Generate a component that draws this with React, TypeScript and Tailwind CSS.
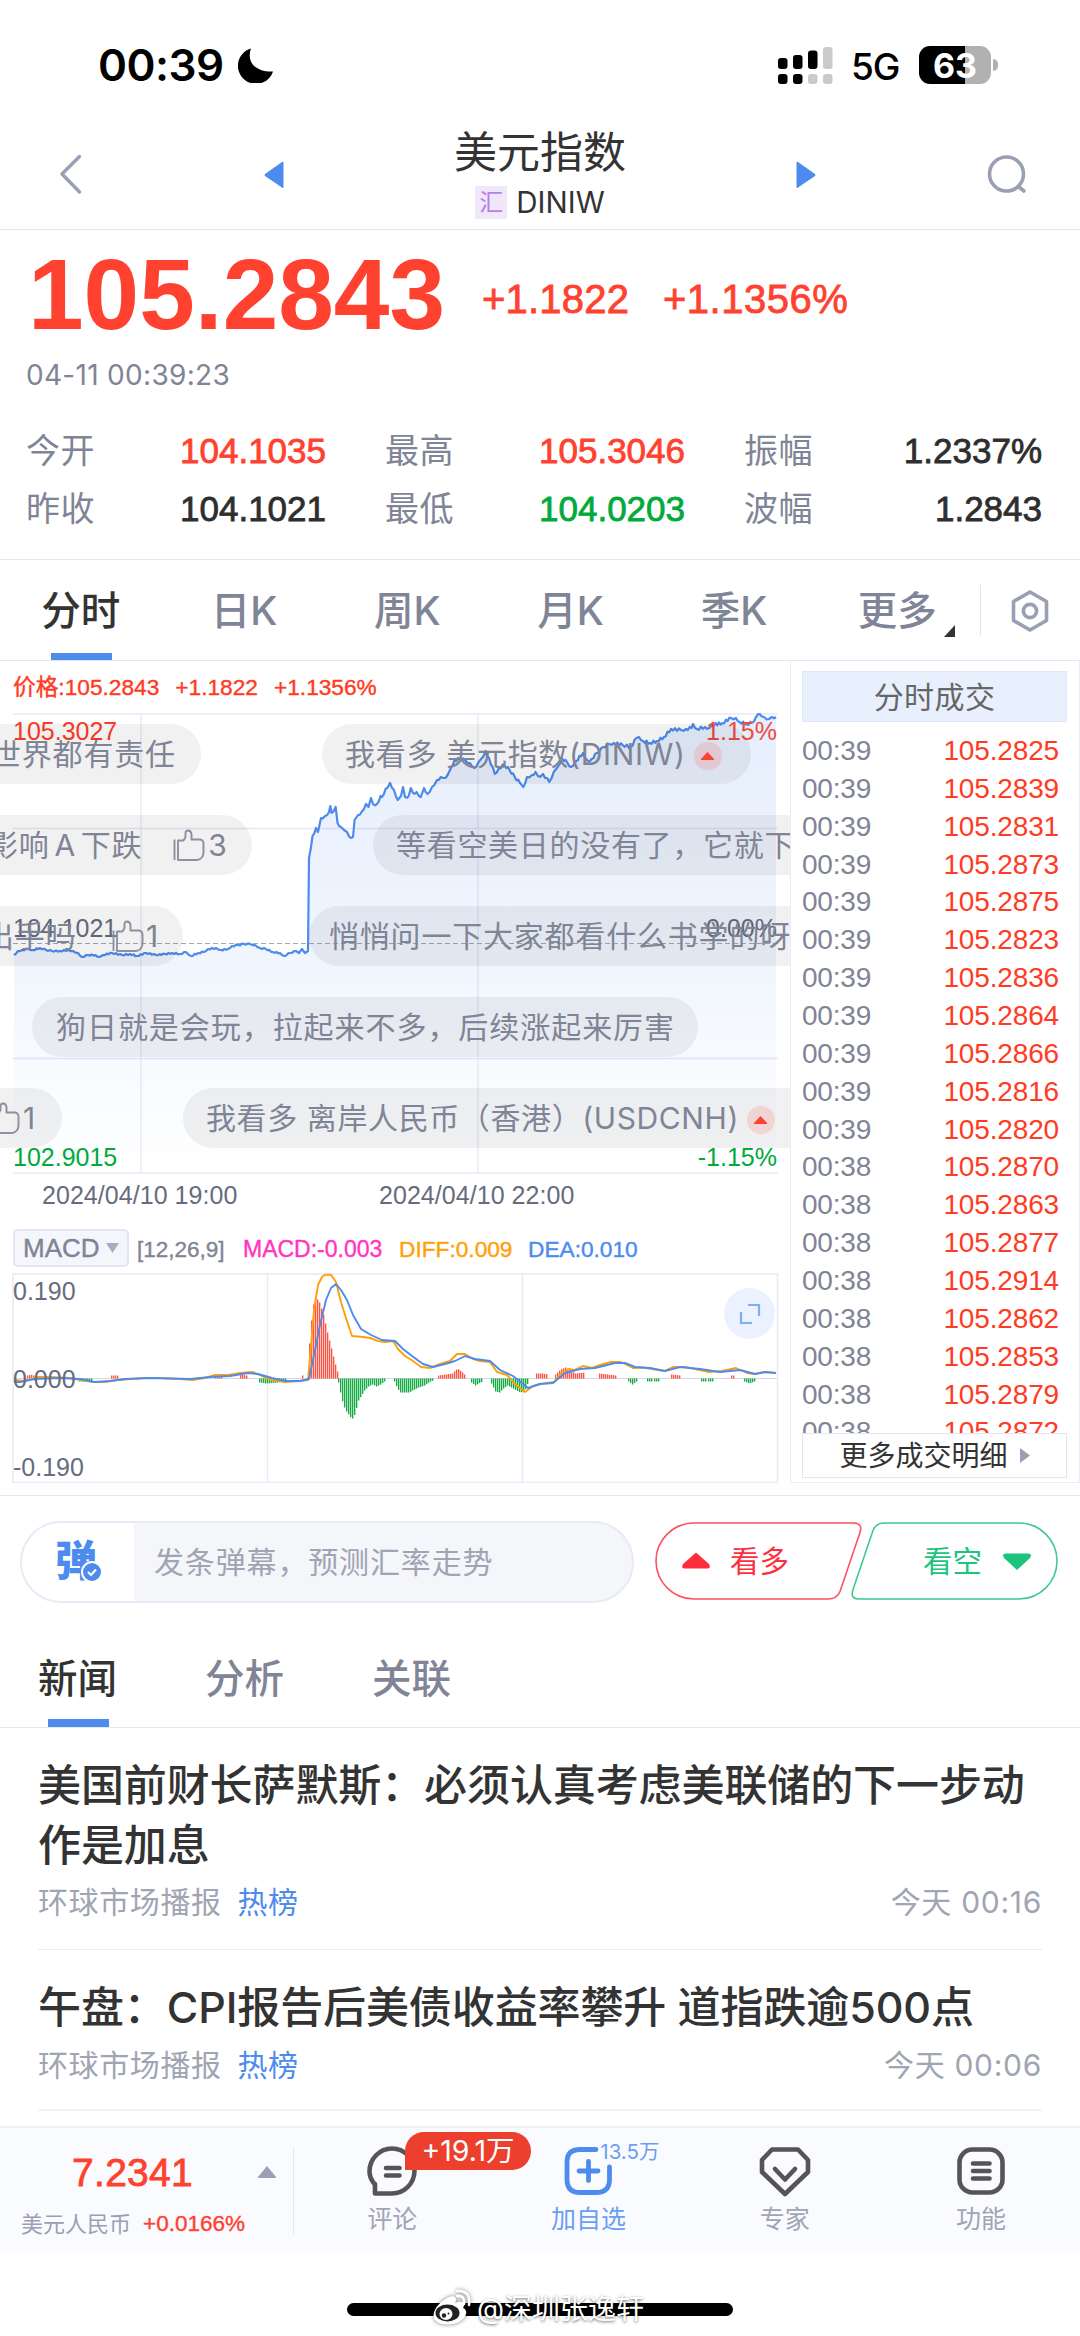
import type { ReactNode } from 'react';

const NUM = "font-['Liberation_Sans','Noto_Sans_CJK_SC',sans-serif]";
const MEDIUM = '[-webkit-text-stroke:0.8px_currentColor]';

type Point = [number, number];

const stats = [
  { label: '今开', value: '104.1035', color: 'text-[#ff412f]' },
  { label: '最高', value: '105.3046', color: 'text-[#ff412f]' },
  { label: '振幅', value: '1.2337%', color: 'text-[#2e2e2e]' },
  { label: '昨收', value: '104.1021', color: 'text-[#2e2e2e]' },
  { label: '最低', value: '104.0203', color: 'text-[#00aa3b]' },
  { label: '波幅', value: '1.2843', color: 'text-[#2e2e2e]' },
];

const periods = ['分时', '日K', '周K', '月K', '季K', '更多'];

const trades = [
  ['00:39', '105.2825'],
  ['00:39', '105.2839'],
  ['00:39', '105.2831'],
  ['00:39', '105.2873'],
  ['00:39', '105.2875'],
  ['00:39', '105.2823'],
  ['00:39', '105.2836'],
  ['00:39', '105.2864'],
  ['00:39', '105.2866'],
  ['00:39', '105.2816'],
  ['00:39', '105.2820'],
  ['00:38', '105.2870'],
  ['00:38', '105.2863'],
  ['00:38', '105.2877'],
  ['00:38', '105.2914'],
  ['00:38', '105.2862'],
  ['00:38', '105.2853'],
  ['00:38', '105.2879'],
  ['00:38', '105.2872'],
];

const news = [
  { title: '美国前财长萨默斯：必须认真考虑美联储的下一步动作是加息', time: '今天 00:16' },
  { title: '午盘：CPI报告后美债收益率攀升 道指跌逾500点', time: '今天 00:06' },
];

// Minute prices, in screen units
const price: Point[] = [
  [14, 955], [18, 951], [22, 950], [28, 949], [33, 950], [40, 948], [46, 950], [52, 951], [60, 951], [68, 950],
  [73, 951], [78, 953], [82, 957], [88, 955], [95, 955], [98, 957], [103, 955], [112, 953], [122, 955], [130, 954],
  [137, 956], [146, 953], [156, 955], [165, 954], [172, 953], [180, 954], [186, 952], [191, 956], [198, 953],
  [204, 952], [208, 949], [216, 948], [221, 950], [228, 949], [232, 946], [238, 945], [244, 944], [250, 944],
  [255, 945], [260, 948], [266, 949], [273, 952], [280, 953], [284, 956], [290, 953], [296, 951], [299, 953],
  [302, 949], [305, 953], [308, 951], [309, 858], [312.5, 836], [316, 828], [318, 832], [321, 818], [325, 816],
  [329, 812], [330.3, 806], [331.6, 813], [335.7, 807], [337.5, 823], [341, 827], [344, 830], [347, 832], [351, 838],
  [353, 837], [354.6, 820], [358, 815], [361.5, 812], [366, 804], [368.5, 807], [371, 798], [373, 804], [377, 804],
  [380.5, 796], [382, 797], [385.5, 789], [390, 783], [394, 790], [397.7, 800], [401, 796], [403, 787], [405, 797],
  [408.7, 796], [410.8, 788], [413, 793], [416.6, 792], [420.8, 797], [424, 788], [427.6, 794], [432, 787],
  [437, 780], [440.7, 777], [443.5, 778], [447.6, 775], [451, 768], [454.5, 760], [459.7, 759], [465, 760],
  [470, 763], [474.5, 768], [478.6, 762], [482, 758], [485.5, 751], [489, 758], [494.8, 774], [499, 768],
  [504.4, 765], [509.6, 770], [514.8, 777], [520, 783], [523.4, 787], [527, 777], [532, 775], [535.5, 772],
  [540, 777], [543, 774], [549.3, 782], [553.7, 772], [557, 768], [562, 758], [567.5, 763], [571, 767], [576, 761],
  [583, 753], [588, 761], [591.6, 759], [597, 753], [603.7, 747], [609, 744], [614, 743], [622.6, 745], [631, 747],
  [636.4, 738], [639, 737], [643, 741], [650, 743], [657, 741], [664, 737], [671, 729], [681, 730], [686, 729],
  [691.5, 728], [693, 724], [696.7, 729], [705, 727], [709.4, 728], [712, 725], [722.5, 723], [731, 718],
  [736, 718], [739.7, 722], [746.6, 724], [752, 723], [756, 717], [759, 713], [764, 717], [769, 719], [772, 717],
  [776, 717],
];

const diff: Point[] = [
  [14, 1380], [24, 1381], [38, 1377], [50, 1377], [70, 1378], [80, 1380], [93, 1382], [105, 1382], [118, 1380],
  [145, 1378], [160, 1378], [180, 1379], [193, 1380], [205, 1378], [215, 1375], [228, 1375], [240, 1373],
  [253, 1372], [262, 1376], [272, 1380], [285, 1382], [300, 1381], [308, 1380], [311, 1345], [314, 1310],
  [318, 1285], [322, 1277], [325, 1274.7], [331, 1274.7], [336, 1282], [341, 1302], [346, 1318], [352, 1336],
  [363, 1337], [370, 1338], [378, 1341], [385, 1342], [393, 1341], [398, 1349], [405, 1356], [413, 1361],
  [421, 1367], [430, 1368], [440, 1364], [450, 1361], [457, 1354], [465, 1354], [473, 1359], [480, 1361],
  [490, 1362], [497, 1372], [507, 1375], [515, 1384], [525, 1392], [533, 1386], [540, 1384], [554, 1382],
  [561, 1373], [569, 1369], [574, 1370], [583, 1366], [592, 1368], [600, 1365], [611, 1362], [621, 1362],
  [633, 1368], [643, 1367.5], [664, 1371], [673, 1367], [685, 1367], [695, 1369], [709, 1372], [722, 1371],
  [736, 1368], [747, 1373], [755, 1374], [764, 1372], [776, 1373],
];

const dea: Point[] = [
  [14, 1382], [20, 1382], [35, 1379], [60, 1378], [80, 1379], [95, 1382], [110, 1381], [125, 1379], [150, 1378],
  [190, 1379], [210, 1377], [230, 1376], [248, 1373], [258, 1374], [272, 1378], [285, 1381], [300, 1381],
  [309, 1379], [314, 1355], [320, 1325], [326, 1300], [331, 1288], [336, 1284], [341, 1290], [347, 1300],
  [353, 1315], [361, 1329], [371, 1335], [382, 1340], [395, 1341], [403, 1349], [412, 1356], [423, 1364],
  [433, 1367], [445, 1364], [455, 1361], [465, 1356], [475, 1359], [490, 1361], [500, 1370], [513, 1376],
  [528, 1388], [540, 1384], [553, 1383], [565, 1373], [580, 1369], [595, 1368], [615, 1363], [625, 1363],
  [635, 1367], [650, 1368], [665, 1371], [680, 1367], [700, 1369], [720, 1372], [740, 1370], [755, 1374],
  [765, 1372], [776, 1373],
];

// Histogram outlines: [x, height], positive is red and negative is green
const histogram: Point[][] = [
  [[27, 3], [30, 4], [33, 3]],
  [[79, -3], [92, -3]],
  [[111, 3], [117, 3]],
  [[215, 2], [221, 2]],
  [[240, 4], [246, 3]],
  [[259, -4], [266, -5], [278, -4], [286, -2]],
  [[302, 3], [303, 3]],
  [[309, 35], [311, 58], [313, 74], [315, 82], [319, 76], [323, 64], [327, 46], [331, 30], [335, 14], [337, 7]],
  [[338, -4], [340, -14], [343, -27], [346, -33], [351, -40], [353, -40], [355, -33], [358, -22], [364, -12],
    [368, -8], [372, -6], [376, -8], [380, -6], [384, -3]],
  [[394, -3], [397, -10], [400, -14], [409, -14], [412, -12], [418, -9], [424, -7], [430, -3], [433, -2]],
  [[438, 3], [445, 4], [452, 5], [457, 10], [461, 7], [465, 3]],
  [[471, -4], [475, -7], [478, -5], [482, -3]],
  [[491, -5], [495, -13], [499, -14], [503, -10], [507, -7], [511, -9], [516, -12], [520, -14], [524, -13], [528, -3]],
  [[536, 5], [541, 5], [547, 4]],
  [[555, 4], [560, 9], [565, 11], [570, 8], [575, 5], [584, 6]],
  [[599, 5], [607, 4], [615, 3]],
  [[628, -3], [632, -6], [636, -3]],
  [[647, -3], [651, -3]],
  [[654, -3], [659, -3]],
  [[671, 4], [680, 3]],
  [[701, -3], [705, -3]],
  [[708, -3], [712, -3]],
  [[731, 3], [733, 3]],
  [[744, -3], [749, -5], [754, -3]],
];

const line = (points: Point[]) => points.map(([x, y]) => `${x},${y}`).join(' ');

// Splits long segments into ticks that wobble a little
function ticks(points: Point[]): Point[] {
  const out: Point[] = [];
  points.forEach(([x, y], i) => {
    out.push([x, y]);
    const next = points[i + 1];
    if (!next || next[0] - x < 3) return;
    const n = Math.floor((next[0] - x) / 1.7);
    for (let k = 1; k < n; k++) {
      const t = k / n;
      const wobble = (k % 2 ? 1 : -1) * (x < 308 ? 0.6 : 1.3);
      out.push([+(x + (next[0] - x) * t).toFixed(1), +(y + (next[1] - y) * t + wobble).toFixed(1)]);
    }
  });
  return out;
}

function bars(outline: Point[]): Point[] {
  const out: Point[] = [];
  const end = outline[outline.length - 1][0];
  for (let x = outline[0][0]; x <= end; x += 2) {
    const i = Math.max(0, outline.findIndex(([px]) => px >= x) - 1);
    const [x0, h0] = outline[i];
    const [x1, h1] = outline[i + 1];
    out.push([x, h0 + ((h1 - h0) * (x - x0)) / (x1 - x0)]);
  }
  return out;
}

function StatusBar() {
  return (
    <div className="flex h-[118px] shrink-0 items-start justify-between pr-[82px] pl-[98px]">
      <div className="flex items-center pt-[38px]">
        <span className="w-[128px] text-[44px] leading-[54px] font-semibold tracking-[-0.5px] text-black">00:39</span>
        <svg className="ml-[12px] h-[35px] w-[36px]" viewBox="0 0 36 35">
          <path d="M13 0.5C9 11 14 24 35 23.5A18 18 0 1 1 13 0.5Z" fill="#000" />
        </svg>
      </div>
      <div className="flex items-center pt-[44px]">
        <svg className="h-[38px] w-[56px]" viewBox="0 0 56 38">
          <g fill="#000">
            <rect x="0" y="12" width="9.5" height="11" rx="3" />
            <rect x="15" y="9" width="9.5" height="14" rx="3" />
            <rect x="30" y="4.500" width="9.500" height="18.500" rx="3" />
            <rect x="0" y="28" width="9.5" height="10" rx="3" />
            <rect x="15" y="28" width="9.5" height="10" rx="3" />
          </g>
          <g fill="#cacaca">
            <rect x="45" y="1" width="9.5" height="22" rx="3" />
            <rect x="30" y="28" width="9.5" height="10" rx="3" />
            <rect x="45" y="28" width="9.5" height="10" rx="3" />
          </g>
        </svg>
        <span className="mt-[4px] ml-[17px] w-[68px] text-[37px] leading-[38px] font-medium tracking-[-1px] text-black">5G</span>
        <div className="flex h-[38px] w-[72px] items-center justify-center rounded-[11px] bg-linear-to-r from-black from-64% to-[#b1b1b1] to-64%">
          <span className="pt-px text-[34px] leading-[38px] font-bold text-white">63</span>
        </div>
        <div className="ml-[2px] h-[12px] w-[5px] rounded-r-full bg-[#b1b1b1]" />
      </div>
    </div>
  );
}

function NavBar() {
  return (
    <div className="flex h-[112px] shrink-0 items-start border-b border-[#e4e6f2] pr-[51px] pl-[57px]">
      <svg className="mt-[34px] h-[44px] w-[28px]" viewBox="0 0 28 44" fill="none" stroke="#9a9fb3" strokeWidth="3.4" strokeLinecap="round" strokeLinejoin="round">
        <path d="M22.500 4.500L5 22L22.500 40" />
      </svg>
      <svg className="mt-[43px] ml-[179px] h-[28px] w-[20px]" viewBox="0 0 20 28" fill="#4d8bee">
        <path d="M19.500 1.500V26.500Q19 27.500 18 26.500L1 15Q0 14 1 13L18 1Q19 0.500 19.500 1.500Z" />
      </svg>
      <div className="flex w-[512px] flex-col items-center">
        <h1 className="mt-[9px] text-[43px] leading-[50px] font-normal text-[#333]">美元指数</h1>
        <div className="mt-[8px] flex items-center gap-[9px]">
          <span className="flex h-[33px] w-[32px] items-center justify-center bg-[#f1e7fb] text-[24px] leading-[33px] text-[#b87fe6]">
            汇
          </span>
          <span className="pt-px text-[29.500px] leading-[33px] text-[#333]">DINIW</span>
        </div>
      </div>
      <svg className="mt-[43px] h-[28px] w-[20px]" viewBox="0 0 20 28" fill="#4d8bee">
        <path d="M0.500 1.500V26.500Q1 27.500 2 26.500L19 15Q20 14 19 13L2 1Q1 0.500 0.500 1.500Z" />
      </svg>
      <svg className="mt-[34px] ml-auto h-[44px] w-[44px]" viewBox="0 0 44 44" fill="none" stroke="#9a9fb3" strokeWidth="3.6" strokeLinecap="round">
        <circle cx="21.500" cy="22" r="17" />
        <path d="M34 35L39 39" />
      </svg>
    </div>
  );
}

function Quote() {
  return (
    <div className="flex h-[330px] shrink-0 flex-col border-b border-[#e4e6f2] px-[26px]">
      <div className={`${NUM} flex h-[128px] items-center text-[#ff412f]`}>
        <span className="ml-[2px] w-[454px] text-[100px] leading-[100px] font-bold">105.2843</span>
        <span className={`${MEDIUM} mt-[10px] w-[181px] text-[40px] leading-[44px] tracking-[0.2px]`}>+1.1822</span>
        <span className={`${MEDIUM} mt-[10px] text-[40px] leading-[44px] tracking-[0.5px]`}>+1.1356%</span>
      </div>
      <div className="h-[34px] text-[28px] leading-[34px] tracking-[0.3px] text-[#7f8496]">04-11 00:39:23</div>
      <div className="mt-[30px] grid grid-cols-[300px_359px_1fr] pr-[12px]">
        {stats.map((s, i) => (
          <div key={s.label} className={`flex h-[58px] items-center justify-between ${i % 3 > 0 ? 'pl-[59px]' : ''}`}>
            <span className="text-[34px] leading-[58px] tracking-[0.5px] text-[#7f8496]">{s.label}</span>
            <span className={`${NUM} ${MEDIUM} text-[35px] leading-[58px] ${s.color}`}>{s.value}</span>
          </div>
        ))}
      </div>
    </div>
  );
}

function PeriodTabs() {
  return (
    <div className="flex h-[101px] shrink-0 items-stretch border-b border-[#e4e6f2]">
      <div className="grid w-[980px] grid-cols-6">
        {periods.map((p, i) => (
          <div key={p} className="relative flex items-center justify-center pt-[2px] pr-[2px]">
            <span className={`text-[39.500px] leading-[50px] font-medium ${i === 0 ? 'text-[#333]' : 'text-[#7f8496]'}`}>{p}</span>
            {i === 0 && <div className="absolute bottom-0 left-[51px] h-[7px] w-[61px] bg-[#4d8bee]" />}
            {i === 5 && (
              <svg className="absolute right-[25px] bottom-[23px] h-[12px] w-[11px]" viewBox="0 0 11 12">
                <path d="M11 0V12H0Z" fill="#333" />
              </svg>
            )}
          </div>
        ))}
      </div>
      <div className="mt-[25px] h-[51px] w-px bg-[#e3e6f2]" />
      <svg className="mt-[28px] ml-[29px] h-[46px] w-[40px]" viewBox="0 0 40 46" fill="none" stroke="#9a9fb3" strokeWidth="3.6">
        <path d="M20 4L36.500 13.500V32.500L20 42L3.500 32.500V13.500Z" strokeLinejoin="round" />
        <circle cx="20" cy="23" r="6.600" />
      </svg>
    </div>
  );
}

function Thumb() {
  return (
    <svg className="h-[32px] w-[32px] shrink-0" viewBox="0 0 32 32" fill="none" stroke="#8c90a1" strokeWidth="1.9" strokeLinejoin="round">
      <path d="M1.500 10.500V31" />
      <path d="M5 11.500H10.500L12.500 8V4Q12.500 1.500 15 1.500Q18 1.500 18.500 5V10.500H27Q30.500 11 30.500 15V24Q30 30 24 31H5Z" />
    </svg>
  );
}

function UpMark() {
  return (
    <div className="mt-[4px] ml-[8px] flex h-[28px] w-[28px] shrink-0 items-center justify-center rounded-full bg-[#ff3b30]/15">
      <svg className="h-[8px] w-[13px]" viewBox="0 0 13 8">
        <path d="M6.500 0L13 7V8H0V7Z" fill="#ff412f" />
      </svg>
    </div>
  );
}

function Bullet({ className, children }: { className: string; children: ReactNode }) {
  return (
    <div
      className={`absolute flex h-[60px] items-center rounded-full bg-black/[0.055] text-[30px] leading-[60px] whitespace-nowrap text-[#7f8496] ${className}`}
    >
      {children}
    </div>
  );
}

function PriceChart() {
  const points = line(ticks(price));
  const label = 'absolute text-[25px] leading-[28px]';
  return (
    <div className="relative h-[461px] overflow-hidden">
      <svg className="absolute top-0 left-[13px] h-[461px] w-[765px]" viewBox="13 713 765 461" fill="none">
        <defs>
          <linearGradient id="area" x1="0" y1="0" x2="0" y2="1">
            <stop offset="0" stopColor="#4d8bee" stopOpacity="0.14" />
            <stop offset="0.55" stopColor="#4d8bee" stopOpacity="0.08" />
            <stop offset="1" stopColor="#4d8bee" stopOpacity="0" />
          </linearGradient>
        </defs>
        <polygon points={`${points} 776,1173 14,1173`} fill="url(#area)" />
        <g stroke="#6a6fc8" strokeOpacity="0.16" strokeWidth="1.300">
          <path d="M13 714H778M13 828.500H778M13 1058.500H778M13 1173H778M141 714V1173M478 714V1173" />
        </g>
        <path d="M13 943.500H778" stroke="#a3a7b5" strokeDasharray="5 3" />
        <polyline points={points} stroke="#4d8bee" strokeWidth="2.200" strokeLinejoin="round" />
      </svg>
      <div className={NUM}>
        <span className={`${label} top-[4px] left-[13px] text-[#ff3b24]`}>105.3027</span>
        <span className={`${label} top-[4px] right-[13px] text-[#f04a42]`}>1.15%</span>
        <span className={`${label} top-[201px] left-[13px] text-[#666c7e]`}>104.1021</span>
        <span className={`${label} top-[201px] right-[13px] text-[#666c7e]`}>0.00%</span>
        <span className={`${label} top-[430px] left-[13px] text-[#00aa3b]`}>102.9015</span>
        <span className={`${label} top-[430px] right-[13px] text-[#00aa3b]`}>-1.15%</span>
      </div>

      {/* Scrolling comments */}
      <Bullet className="top-[11px] left-[-40px] pr-[25px] pl-[31px] tracking-[0.8px]">世界都有责任</Bullet>
      <Bullet className="top-[11px] left-[322px] w-[429px] pl-[23px] tracking-[0.7px]">
        我看多 美元指数(DINIW)
        <UpMark />
      </Bullet>
      <Bullet className="top-[102px] left-[-60px] w-[312px] pl-[48px] tracking-[0.7px]">
        影响<span className="mx-[5px]">A</span>下跌
        <div className="ml-[31px] flex items-center gap-[3px]">
          <Thumb />3
        </div>
      </Bullet>
      <Bullet className="top-[102px] left-[373px] w-[500px] pl-[23px] tracking-[0.7px]">等看空美日的没有了，它就下跌</Bullet>
      <Bullet className="top-[193px] left-[-60px] w-[243px] pl-[44px] tracking-[0.7px]">
        出手吗
        <div className="ml-[36px] flex items-center gap-[2px]">
          <Thumb />1
        </div>
      </Bullet>
      <Bullet className="top-[193px] left-[309px] w-[560px] pl-[20px] tracking-[0.8px]">悄悄问一下大家都看什么书学的呀</Bullet>
      <Bullet className="top-[284px] left-[32px] w-[666px] pl-[24px] tracking-[0.95px]">狗日就是会玩，拉起来不多，后续涨起来厉害</Bullet>
      <Bullet className="top-[375px] left-[-60px] w-[122px] pl-[48px]">
        <Thumb />
        <span className="ml-[3px]">1</span>
      </Bullet>
      <Bullet className="top-[375px] left-[183px] w-[640px] pl-[23px] tracking-[0.6px]">
        我看多 离岸人民币（香港）(USDCNH)
        <UpMark />
      </Bullet>
    </div>
  );
}

function MacdChart() {
  const label = 'absolute left-[13px] text-[25px] leading-[28px] text-[#666c7e]';
  return (
    <div className={`${NUM} relative h-[210px]`}>
      <svg className="absolute top-0 left-[12px] h-[210px] w-[767px]" viewBox="12 1273 767 210" fill="none">
        <path d="M13 1274H777.500V1482.500H13ZM267.500 1274V1482M522.500 1274V1482" stroke="#e8eaf5" strokeWidth="1.500" />
        <path d="M13 1378.500H777" stroke="#d5d7e2" />
        {histogram.map((outline) =>
          bars(outline).map(([x, h]) => (
            <rect
              key={x}
              x={x}
              y={h > 0 ? 1378.5 - h : 1378.5}
              width="1.350"
              height={Math.abs(h)}
              fill={h > 0 ? '#fc5446' : '#14ab43'}
            />
          )),
        )}
        <polyline points={line(diff)} stroke="#ff9f0a" strokeWidth="1.900" strokeLinejoin="round" />
        <polyline points={line(dea)} stroke="#4d8bee" strokeWidth="1.900" strokeLinejoin="round" />
      </svg>
      <span className={`${label} top-[4px]`}>0.190</span>
      <span className={`${label} top-[92px]`}>0.000</span>
      <span className={`${label} top-[180px]`}>-0.190</span>
      <div className="absolute top-[15px] left-[724px] flex h-[51px] w-[51px] items-center justify-center rounded-full bg-[#ebf1fe]">
        <svg className="h-[22px] w-[22px]" viewBox="0 0 22 22" fill="none" stroke="#82abf4" strokeWidth="2.200">
          <path d="M9 2H20V13M2 9V20H13" />
        </svg>
      </div>
    </div>
  );
}

function ChartPanel() {
  return (
    <div className="flex w-[790px] flex-col overflow-hidden">
      <div className={`${NUM} flex h-[52px] items-center gap-[16px] pl-[13px] text-[22.700px] leading-[52px] text-[#ff3b24] [-webkit-text-stroke:0.4px_currentColor]`}>
        <span>价格:105.2843</span>
        <span>+1.1822</span>
        <span>+1.1356%</span>
      </div>
      <PriceChart />
      <div className={`${NUM} flex h-[55px] pl-[42px] text-[25px] leading-[43px] tracking-[0.05px] text-[#666c7e]`}>
        <span className="w-[337px]">2024/04/10 19:00</span>
        <span>2024/04/10 22:00</span>
      </div>
      <div className={`${NUM} flex h-[44px] items-start pl-[13px] text-[23px] leading-[41px] [-webkit-text-stroke:0.4px_currentColor]`}>
        <div className="flex h-[38px] w-[116px] items-center gap-[6px] rounded-[5px] border-2 border-[#e3e6f2] bg-[#f5f6fb] pl-[8px] text-[26px] leading-[35px] text-[#7f8496]">
          MACD
          <svg className="h-[10px] w-[13px]" viewBox="0 0 13 10">
            <path d="M0 0H13L6.500 10Z" fill="#a9adbd" />
          </svg>
        </div>
        <span className="ml-[8px] w-[106px] text-[22.500px] text-[#7f8496]">[12,26,9]</span>
        <span className="w-[156px] text-[#ff36c0]">MACD:-0.003</span>
        <span className="w-[129px] text-[22.700px] text-[#ff9f0a]">DIFF:0.009</span>
        <span className="text-[22.700px] text-[#4d8bee]">DEA:0.010</span>
      </div>
      <MacdChart />
    </div>
  );
}

function TradeList() {
  return (
    <div className="flex h-[822px] w-[290px] flex-col border border-t-0 border-[#e9ebf5] pt-[10px] pr-[12px] pl-[11px]">
      <div className="flex h-[51px] shrink-0 items-center justify-center border border-[#dfe8fa] bg-[#e8f0fe] text-[30px] leading-[50px] tracking-[0.4px] text-[#666]">
        分时成交
      </div>
      <div className={`${NUM} mt-[9px] h-[702px] overflow-hidden pt-px`}>
        {trades.map(([time, value], i) => (
          <div key={i} className="flex h-[37.870px] items-center justify-between pr-[8px] text-[28px] leading-[38px]">
            <span className="tracking-[-0.2px] text-[#7f8496]">{time}</span>
            <span className="tracking-[-0.15px] text-[#ff3b24]">{value}</span>
          </div>
        ))}
      </div>
      <div className="flex h-[45px] shrink-0 items-center justify-center gap-[12px] border border-[#e3e6f2] bg-white text-[28px] leading-[44px] text-[#333]">
        更多成交明细
        <svg className="h-[15px] w-[10px]" viewBox="0 0 10 15">
          <path d="M0 0L10 7.500L0 15Z" fill="#9a9fb3" />
        </svg>
      </div>
    </div>
  );
}

function Composer() {
  return (
    <div className="flex h-[131px] shrink-0 items-start pt-[25px] pl-[20px]">
      <div className="flex h-[82px] w-[614px] overflow-hidden rounded-full border-2 border-[#e8eaf6] bg-[#f5f6fa]">
        <div className="relative w-[112px] bg-white">
          <span className="absolute top-[15px] left-[33px] text-[42px] leading-[46px] font-black text-[#4d8bee]">弹</span>
          <svg className="absolute top-[38px] left-[59px] h-[22px] w-[22px]" viewBox="0 0 22 22">
            <circle cx="11" cy="11" r="10" fill="#4d8bee" stroke="#fff" strokeWidth="2" />
            <path d="M7 11L10 14L15 8.500" fill="none" stroke="#fff" strokeWidth="2.200" />
          </svg>
        </div>
        <span className="pl-[20px] text-[30px] leading-[78px] tracking-[0.85px] text-[#a0a4b3]">发条弹幕，预测汇率走势</span>
      </div>
      <div className="relative ml-[21px] h-[80px] w-[404px]">
        <svg className="absolute inset-0 h-[80px] w-[404px]" viewBox="655 1521.500 404 80" fill="none" strokeWidth="1.600">
          <path d="M694 1523.500H854Q863 1524 860 1533L840 1592Q837 1599.500 828 1599.500H694A38 38 0 0 1 694 1523.500Z" stroke="#f9535f" />
          <path d="M1019 1599.500H858Q850 1599 853 1590L873 1531Q876 1523.500 884 1523.500H1019A38 38 0 0 1 1019 1599.500Z" stroke="#3fca8f" />
          <path d="M696 1553L709 1564.500Q711.500 1569 707 1569H685Q680.500 1569 683 1564.500Z" fill="#ff2d3c" />
          <path d="M1017 1570.500L1030 1558.500Q1032.500 1554 1028 1554H1006Q1001.500 1554 1004 1558.500Z" fill="#1bc47d" />
        </svg>
        <div className="relative flex text-[29.500px] leading-[80px]">
          <span className="w-[193px] pl-[75px] text-[#ff2d3c]">看多</span>
          <span className="pl-[75px] text-[#1bc47d]">看空</span>
        </div>
      </div>
    </div>
  );
}

function NewsList() {
  return (
    <>
      <div className="relative flex h-[101px] shrink-0 gap-[88px] border-b border-[#e4e6f2] pl-[38px] text-[39.500px] leading-[104px] font-medium text-[#7f8496]">
        <span className="text-[#333]">新闻</span>
        <span>分析</span>
        <span>关联</span>
        <div className="absolute bottom-0 left-[48px] h-[8px] w-[61px] bg-[#4d8bee]" />
      </div>
      <div className="h-[398px] shrink-0 overflow-hidden px-[38px]">
        {news.map((n) => (
          <div key={n.title} className="border-b border-[#e8eaf4] pt-[28px] pb-[28px] last:border-b-2 last:border-[#f2f3fa] last:pb-[25px]">
            <h2 className="mr-[-10px] text-[43px] leading-[59.500px] font-medium tracking-[-0.1px] text-[#333]">{n.title}</h2>
            <div className="mt-[8px] flex h-[38px] items-center text-[30px] leading-[38px] text-[#a0a4b3]">
              <span className="tracking-[0.6px]">环球市场播报</span>
              <span className="ml-[16px] tracking-[0.3px] text-[#4d8bee]">热榜</span>
              <span className="ml-auto tracking-[0.7px]">{n.time}</span>
            </div>
          </div>
        ))}
      </div>
    </>
  );
}

function BottomBar() {
  const item = 'relative flex w-[196.300px] flex-col items-center pt-[16px]';
  const caption = 'mt-[5px] text-[25px] leading-[32px] text-[#a0a4b3]';
  return (
    <div className="flex h-[125px] shrink-0 border-t-2 border-[#eceef8] bg-[#fafbff]">
      <div className="flex w-[293px] flex-col">
        <div className={`${NUM} flex h-[74px] items-end pl-[72px] text-[#ff412f]`}>
          <span className={`${MEDIUM} w-[186px] pb-[2px] text-[39px] leading-[54px] tracking-[0.3px]`}>7.2341</span>
          <svg className="mb-[24px] h-[12px] w-[18px]" viewBox="0 0 18 12">
            <path d="M9 0L18 11V12H0V11Z" fill="#9a9fb3" />
          </svg>
        </div>
        <div className="flex items-center pl-[21px] leading-[44px]">
          <span className="w-[122px] text-[22px] text-[#9a9fb3]">美元人民币</span>
          <span className={`${NUM} text-[22.500px] text-[#ff412f] [-webkit-text-stroke:0.4px_currentColor]`}>+0.0166%</span>
        </div>
      </div>
      <div className="mt-[20px] h-[86px] w-px bg-[#e3e6f2]" />

      <div className={item}>
        <svg className="h-[54px] w-[54px]" viewBox="0 0 54 54" fill="none" stroke="#555" strokeWidth="4.600">
          <path d="M9.500 40Q4.500 34 4.500 27.500A22.500 23 0 0 1 49.500 27.500A22.500 23 0 0 1 27 49.500H10V40Z" strokeLinejoin="round" />
          <path d="M21 24H34.500M21 31.500H34.500" strokeLinecap="round" />
        </svg>
        <span className={caption}>评论</span>
        <div className="absolute top-[4px] left-[111px] flex h-[38px] w-[126px] items-center justify-center rounded-full rounded-bl-none bg-[#ec3f2e] text-[28.500px] leading-[38px] text-white">
          +19.1万
        </div>
      </div>
      <div className={item}>
        <svg className="h-[54px] w-[54px]" viewBox="0 0 54 54" fill="none" stroke="#4d8bee" strokeWidth="4.800" strokeLinecap="round">
          <path d="M35 5.500H19Q6 5.500 6 18.500V35.500Q6 48.500 19 48.500H35Q48.500 48.500 48.500 35.500V23" />
          <path d="M27.500 17.500V36.500M18 27H37" />
        </svg>
        <span className="mt-[5px] text-[25px] leading-[32px] text-[#6b9ff3]">加自选</span>
        <span className="absolute top-[11px] left-[110px] text-[20.500px] leading-[26px] text-[#6b9ff3]">13.5万</span>
      </div>
      <div className={item}>
        <svg className="h-[54px] w-[54px]" viewBox="0 0 54 54" fill="none" stroke="#555" strokeWidth="4.600" strokeLinejoin="round">
          <path d="M14 5.500H40L50 16V28L27 50L4 28V16Z" />
          <path d="M17 25L27 35.500L37 25" strokeLinecap="round" />
        </svg>
        <span className={caption}>专家</span>
      </div>
      <div className={item}>
        <svg className="h-[54px] w-[54px]" viewBox="0 0 54 54" fill="none" stroke="#555" strokeWidth="4.600" strokeLinecap="round">
          <rect x="5.500" y="5.500" width="43" height="43" rx="13" />
          <path d="M19 19.500H35.500M19 27H35.500M19 34.500H35.500" />
        </svg>
        <span className={caption}>功能</span>
      </div>
    </div>
  );
}

function HomeIndicator() {
  return (
    <div className="relative h-[85px] shrink-0 bg-white pt-[52px]">
      <div className="mx-auto h-[13px] w-[386px] rounded-full bg-black" />
      <div className="absolute top-[38px] left-[432px] flex items-center">
        <svg className="h-[40px] w-[42px] drop-shadow-[0_0_2px_rgba(0,0,0,0.5)]" viewBox="0 0 42 40">
          <path d="M15 9C22 5 26 9 23 14C30 11 34 14 31 19C36 21 35 27 30 31C22 37 8 37 3 31C-2 24 7 13 15 9Z" fill="#fff" />
          <ellipse cx="15.500" cy="24" rx="12" ry="8.500" fill="#222" />
          <ellipse cx="14" cy="25" rx="6.500" ry="6" fill="#fff" />
          <circle cx="12" cy="26.500" r="2.200" fill="#222" />
          <circle cx="16.500" cy="24.500" r="1" fill="#222" />
          <path d="M25 7Q33 6 32 15M25 2Q39 1 37 16" fill="none" stroke="#fff" strokeWidth="2.600" strokeLinecap="round" />
        </svg>
        <span className="ml-[3px] text-[28px] leading-[40px] text-white [text-shadow:0_1px_3px_rgba(0,0,0,0.6)]">@深圳张逸轩</span>
      </div>
    </div>
  );
}

export default function App() {
  return (
    <div className="flex h-[2336px] w-[1080px] flex-col overflow-hidden bg-white font-['Inter','Noto_Sans_CJK_SC',sans-serif]">
      <StatusBar />
      <NavBar />
      <Quote />
      <PeriodTabs />
      <div className="flex h-[835px] shrink-0 items-start border-b border-[#e4e6f2]">
        <ChartPanel />
        <TradeList />
      </div>
      <Composer />
      <NewsList />
      <BottomBar />
      <HomeIndicator />
    </div>
  );
}
